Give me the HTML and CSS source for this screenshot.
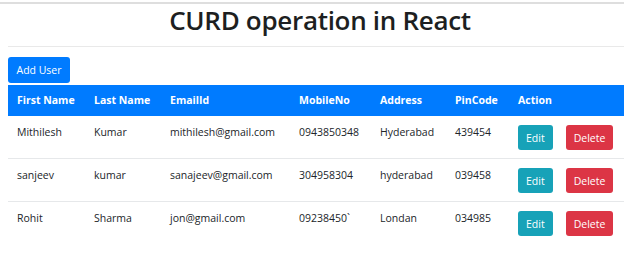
FILE: index.html
```html
<!DOCTYPE html>
<html lang="en">
<head>
<meta charset="utf-8">
<title>CURD operation in React</title>
<link rel="stylesheet" href="styles.css">
</head>
<body>
<div class="topline"></div>
<div class="container">
  <h1 class="title">CURD operation in React</h1>
  <hr class="rule">
  <button class="btn btn-primary add-btn">Add User</button>
  <table class="table">
    <colgroup>
      <col class="c-first"><col class="c-last"><col class="c-email"><col class="c-mobile"><col class="c-addr"><col class="c-pin"><col class="c-action">
    </colgroup>
    <thead>
      <tr>
        <th>First Name</th><th>Last Name</th><th>EmailId</th><th>MobileNo</th><th>Address</th><th>PinCode</th><th>Action</th>
      </tr>
    </thead>
    <tbody>
      <tr>
        <td>Mithilesh</td><td>Kumar</td><td>mithilesh@gmail.com</td><td>0943850348</td><td>Hyderabad</td><td>439454</td>
        <td><div class="actions"><button class="btn btn-info">Edit</button><button class="btn btn-danger">Delete</button></div></td>
      </tr>
      <tr>
        <td>sanjeev</td><td>kumar</td><td>sanajeev@gmail.com</td><td>304958304</td><td>hyderabad</td><td>039458</td>
        <td><div class="actions"><button class="btn btn-info">Edit</button><button class="btn btn-danger">Delete</button></div></td>
      </tr>
      <tr>
        <td>Rohit</td><td>Sharma</td><td>jon@gmail.com</td><td>09238450`</td><td>Londan</td><td>034985</td>
        <td><div class="actions"><button class="btn btn-info">Edit</button><button class="btn btn-danger">Delete</button></div></td>
      </tr>
    </tbody>
  </table>
</div>
</body>
</html>
```
FILE: styles.css
```css
html, body {
  margin: 0;
  padding: 0;
  background: #fff;
  overflow: hidden;
}
body {
  font-family: "Segoe UI", "Open Sans", sans-serif;
  color: #212529;
  font-size: 10.5px;
  line-height: 1.5;
}
.topline {
  height: 2px;
  margin-top: 2px;
  background: #dedede;
}
.container {
  margin-left: 8px;
  width: 624px;
}
.title {
  margin: 0;
  padding-top: 1px;
  font-size: 26px;
  font-weight: 600;
  letter-spacing: -0.3px;
  line-height: 31px;
  text-align: center;
  color: #1d1f21;
}
.rule {
  margin: 10px 0 10px;
  border: 0;
  border-top: 1px solid #e9e9e9;
}
.btn {
  display: inline-flex;
  align-items: center;
  justify-content: center;
  height: 25px;
  padding: 0 8px;
  border: 0;
  border-radius: 3px;
  font-family: inherit;
  font-size: 10.5px;
  color: #fff;
  cursor: pointer;
}
.btn-primary { background: #007bff; }
.btn-info { background: #17a2b8; }
.btn-danger { background: #dc3545; }
.add-btn {
  height: 26px;
  padding: 0 8.5px;
  margin-bottom: 2px;
  display: flex;
}
.table {
  width: 624px;
  table-layout: fixed;
  border-collapse: collapse;
}
.c-first { width: 77px; }
.c-last { width: 76px; }
.c-email { width: 129px; }
.c-mobile { width: 81px; }
.c-addr { width: 75px; }
.c-pin { width: 63px; }
.table th {
  background: #007bff;
  color: #fff;
  font-weight: 700;
  text-align: left;
  padding: 8px 9px;
  line-height: 15px;
}
.table td {
  padding: 9px 9px 8px;
  vertical-align: top;
  line-height: 15px;
  border-bottom: 1px solid #e6e8ea;
  white-space: nowrap;
}
.table tbody tr:last-child td {
  border-bottom: 0;
}
.actions {
  display: flex;
  gap: 13px;
}
```
